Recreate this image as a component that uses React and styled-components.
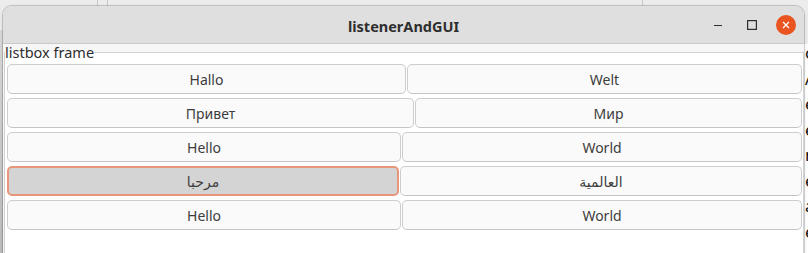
import React from 'react';
import styled, {createGlobalStyle} from 'styled-components';

const GlobalStyle = createGlobalStyle`
    html, body {
        margin: 0;
        padding: 0;
        background: #ececec;
        overflow: hidden;
    }
    body {
        font-family: "Noto Sans", "DejaVu Sans", sans-serif;
    }
`;

const rows = [
    {left: 'Hallo', right: 'Welt', split: 399},
    {left: 'Привет', right: 'Мир', split: 407},
    {left: 'Hello', right: 'World', split: 394},
    {left: 'مرحبا', right: 'العالمية', split: 392, selected: true},
    {left: 'Hello', right: 'World', split: 394},
];

const backLines = ['c', 'A', 'e', 'e', 'n', 'e', 'a', 'e'];

function App() {
    return (
        <Desktop>
            <GlobalStyle />
            <TopEdge x={97} />
            <TopEdge x={107} />
            <TopEdge x={642} />
            <LeftPane />
            <BackPane>
                {backLines.map((c, i) => <BackLine key={i}>{c}</BackLine>)}
            </BackPane>

            <Window>
                <TitleBar>
                    <span />
                    <Title>listenerAndGUI</Title>
                    <Controls>
                        <ControlButton aria-label="minimize">
                            <svg width="10" height="10" viewBox="0 0 10 10">
                                <path d="M1 5.5h8" stroke="#2e2e2e" strokeWidth="1.2" />
                            </svg>
                        </ControlButton>
                        <ControlButton aria-label="maximize">
                            <svg width="10" height="10" viewBox="0 0 10 10">
                                <rect x="0.6" y="0.6" width="8.8" height="8.8" fill="none" stroke="#2e2e2e" strokeWidth="1.2" />
                            </svg>
                        </ControlButton>
                        <CloseButton aria-label="close">
                            <svg width="8" height="8" viewBox="0 0 8 8">
                                <path d="M1 1l6 6M7 1L1 7" stroke="#fff" strokeWidth="1.3" />
                            </svg>
                        </CloseButton>
                    </Controls>
                </TitleBar>

                <Frame>
                    <FrameLabel>listbox frame</FrameLabel>
                    <List>
                        {rows.map((r, i) => (
                            <Row key={i}>
                                <RowButton selected={r.selected} style={{width: r.split}}>{r.left}</RowButton>
                                <RowButton grow>{r.right}</RowButton>
                            </Row>
                        ))}
                    </List>
                </Frame>
            </Window>
        </Desktop>
    );
}

const Desktop = styled.div`
    position: relative;
    width: 808px;
    height: 253px;
    overflow: hidden;
    background: #ececec;
`;

const TopEdge = styled.div`
    position: absolute;
    top: 0;
    left: ${p => p.x}px;
    width: 1px;
    height: 8px;
    background: #c9c9c9;
`;

const LeftPane = styled.div`
    position: absolute;
    left: 0;
    top: 30px;
    bottom: 0;
    width: 3px;
    background: linear-gradient(#dadada, #bdbdbd);
`;

const BackPane = styled.div`
    position: absolute;
    left: 803px;
    top: 44px;
    width: 20px;
    bottom: 0;
    background: #ffffff;
    padding: 0 0 0 2px;
    display: flex;
    flex-direction: column;
    font-family: "Noto Sans", sans-serif;
    font-size: 17px;
    color: #111;
`;

const BackLine = styled.div`
    height: 25.5px;
    line-height: 25.5px;
    &:first-child {
        margin-top: -4px;
    }
`;

const Window = styled.div`
    position: absolute;
    left: 3px;
    top: 6px;
    width: 801px;
    height: 270px;
    background: #f6f6f6;
    border-radius: 9px 9px 0 0;
    box-shadow: 0 0 0 1px rgba(0, 0, 0, 0.16), 0 1px 4px rgba(0, 0, 0, 0.12);
    overflow: hidden;
    z-index: 1;
    display: flex;
    flex-direction: column;
`;

const TitleBar = styled.div`
    height: 37px;
    flex: none;
    display: grid;
    grid-template-columns: 1fr auto 1fr;
    align-items: center;
    background: #dfdfdf;
    border-bottom: 1px solid #cacaca;
`;

const Title = styled.div`
    font-size: 14.5px;
    font-weight: 700;
    color: #2e2e2e;
    padding-top: 2px;
`;

const Controls = styled.div`
    justify-self: end;
    display: flex;
    align-items: center;
    gap: 10px;
    padding-right: 8px;
`;

const ControlButton = styled.div`
    width: 24px;
    height: 24px;
    display: flex;
    align-items: center;
    justify-content: center;
`;

const CloseButton = styled.div`
    width: 20px;
    height: 20px;
    border-radius: 50%;
    background: #e95420;
    display: flex;
    align-items: center;
    justify-content: center;
    margin-left: 2px;
`;

const Frame = styled.fieldset`
    margin: 0 0 0 1px;
    padding: 0 1px 0 2px;
    border: 1px solid #d2d2d2;
    border-bottom: none;
    background: #ffffff;
    flex: 1;
    min-width: 0;
`;

const FrameLabel = styled.legend`
    padding: 0;
    margin-left: -2px;
    font-size: 14.5px;
    line-height: 17px;
    color: #2e2e2e;
`;

const List = styled.div`
    display: flex;
    flex-direction: column;
    gap: 4px;
    padding-top: 3px;
`;

const Row = styled.div`
    display: flex;
    gap: 1px;
    height: 30px;
`;

const RowButton = styled.div`
    box-sizing: border-box;
    flex: ${p => (p.grow ? '1 1 0' : 'none')};
    display: flex;
    align-items: center;
    justify-content: center;
    border-radius: 5px;
    font-size: 14px;
    color: #3d3d3d;
    background: ${p => (p.selected ? '#d4d4d4' : '#fafafa')};
    border: ${p => (p.selected ? '2px solid #e8967a' : '1px solid #cdcdcd')};
    border-bottom-color: ${p => (p.selected ? '#e8967a' : '#c4c4c4')};
`;

export default App;
